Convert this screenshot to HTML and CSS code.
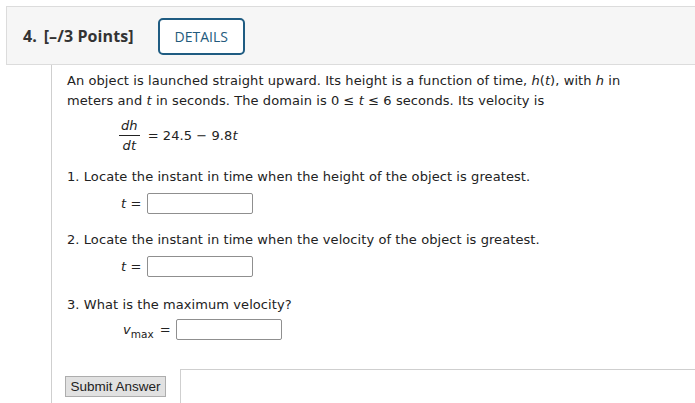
FILE: index.html
```html
<!DOCTYPE html>
<html>
<head>
<meta charset="utf-8">
<link rel="stylesheet" href="styles.css">
</head>
<body>
<div class="header">
  <span class="qnum">4.</span>
  <span class="points">[–/3 Points]</span>
  <button class="details">DETAILS</button>
</div>
<div class="body">
  <p class="intro">An object is launched straight upward. Its height is a function of time, <i>h</i>(<i>t</i>), with <i>h</i> in meters and <i>t</i> in seconds. The domain is 0 ≤ <i>t</i> ≤ 6 seconds. Its velocity is</p>
  <div class="eq">
    <span class="frac"><span class="num"><i>dh</i></span><span class="den"><i>dt</i></span></span>
    <span class="rhs">= 24.5 − 9.8<i>t</i></span>
  </div>
  <p class="q q1">1. Locate the instant in time when the height of the object is greatest.</p>
  <div class="ans ans1"><span class="lbl"><i>t</i> =</span><span class="box"></span></div>
  <p class="q q2">2. Locate the instant in time when the velocity of the object is greatest.</p>
  <div class="ans ans2"><span class="lbl"><i>t</i> =</span><span class="box"></span></div>
  <p class="q q3">3. What is the maximum velocity?</p>
  <div class="ans ans3"><span class="vlbl"><i>v</i><sub>max</sub></span><span class="eqs">=</span><span class="box"></span></div>
  <div class="footer">
    <button class="submit">Submit Answer</button>
    <div class="panel"></div>
  </div>
</div>
</body>
</html>
```
FILE: styles.css
```css
html, body { margin: 0; padding: 0; background: #fff; }
body { width: 695px; height: 403px; overflow: hidden; }

.header {
  margin: 6px 0 0 6px;
  height: 57px;
  background: #f6f6f6;
  border: 1px solid #dcdcdc;
  border-right: none;
  display: flex;
  align-items: center;
  padding-left: 16px;
  font-family: "Open Sans", sans-serif;
  font-weight: 700;
  font-size: 16px;
  color: #333;
}
.qnum { margin-right: 7px; }
.points { margin-right: 24px; letter-spacing: 0.1px; }
.details {
  width: 87px;
  height: 37px;
  background: #fff;
  border: 2px solid #1f5c82;
  border-radius: 5px;
  font-family: "Open Sans", sans-serif;
  font-weight: 400;
  font-size: 14px;
  color: #235a7c;
  padding: 0;
  margin-top: 1px;
}

.body {
  margin-left: 51px;
  border-left: 1px solid #cfcfcf;
  padding-left: 15px;
  height: 340px;
  font-family: "DejaVu Sans", Verdana, sans-serif;
  font-size: 13px;
  letter-spacing: 0.08px;
  color: #222;
}
.body i { font-style: italic; }
.intro { margin: 0; padding-top: 6px; line-height: 20px; width: 590px; }

.eq { display: flex; align-items: center; margin: 4px 0 0 52px; height: 40px; }
.frac { display: inline-flex; flex-direction: column; align-items: center; margin-right: 8px; }
.num { border-bottom: 1px solid #222; padding: 0 2px 2px; line-height: 15px; }
.den { padding-top: 2px; line-height: 15px; }

.q { margin: 0; line-height: 20px; }
.q1 { margin-top: 12px; }
.q2 { margin-top: 16px; }
.q3 { margin-top: 18px; }

.ans { display: flex; align-items: center; margin-left: 54px; height: 22px; }
.ans1 { margin-top: 5px; }
.ans2 { margin-top: 5px; }
.lbl { width: 20px; margin-right: 6px; white-space: nowrap; }
.box {
  width: 104px;
  height: 19px;
  border: 1px solid #8f8f8f;
  border-radius: 2px;
  background: #fff;
}
.ans3 { margin-left: 56px; margin-top: 3px; }
.vlbl { white-space: nowrap; }
.eqs { margin: 0 5px 0 6px; }
sub { font-size: 10.5px; vertical-align: -4px; line-height: 0; letter-spacing: 0; }

.footer { display: flex; align-items: flex-start; margin-top: 29px; margin-left: -2px; }
.submit {
  margin-top: 7px;
  width: 101px;
  height: 21px;
  background: #e1e1e1;
  border: 1px solid #adadad;
  border-radius: 0;
  font-family: "Liberation Sans", Arial, sans-serif;
  font-size: 13.5px;
  color: #222;
  padding: 0;
}
.panel {
  margin-left: 14px;
  flex: 1;
  height: 40px;
  border-top: 1px solid #cfcfcf;
  border-left: 1px solid #cfcfcf;
}
```
